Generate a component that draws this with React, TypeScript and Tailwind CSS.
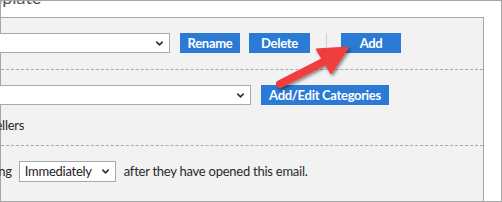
import { ChevronDown } from "lucide-react";

function Select({ className, label }: { className: string; label?: string }) {
    return (
        <div className={`flex items-center justify-between bg-white border border-[#a9a9a9] text-[#222] ${className}`}>
            <span className="pl-[5px]">{label}</span>
            <ChevronDown className="w-[11px] h-[11px] mr-[4px] text-[#333]" strokeWidth={3.5} />
        </div>
    );
}

function Btn({ children, className }: { children: React.ReactNode; className: string }) {
    return (
        <button className={`h-[20px] bg-[#2b7bd6] text-white text-[13px] tracking-[-0.3px] font-bold leading-none flex items-center justify-center ${className}`}>
            {children}
        </button>
    );
}

export default function App() {
    return (
        <div className="relative w-[502px] h-[202px] overflow-hidden bg-white font-['Lato',sans-serif]">
            <div className="w-[502px] h-[202px] border border-[#a6a6a6] flex flex-col">
                {/* Heading (cut off by the crop) */}
                <div className="h-[16px] overflow-hidden">
                    <h2 className="text-[18px] leading-[20px] text-[#555] mt-[-14px] ml-[-78px] whitespace-nowrap">Email Template</h2>
                </div>

                <div className="w-[483px] flex-1 bg-[#f2f2f2] border-t border-r border-[#a6a6a6] text-[13px] tracking-[-0.25px] text-[#2a2a2a]">
                    {/* Template row */}
                    <div className="flex items-center pt-[15px]">
                        <Select className="h-[20px] w-[209px] ml-[-40px]" />
                        <Btn className="w-[60px] ml-[10px]">Rename</Btn>
                        <Btn className="w-[61px] ml-[9px]">Delete</Btn>
                        <div className="w-px h-[20px] bg-[#d0d0d0] ml-[16px]" />
                        <Btn className="w-[60px] ml-[14px]">Add</Btn>
                    </div>

                    <div className="mt-[16px] border-t border-dashed border-[#aaa]" />

                    {/* Category row */}
                    <div className="flex items-center pt-[15px]">
                        <Select className="h-[20px] w-[290px] ml-[-40px]" />
                        <Btn className="w-[128px] ml-[10px]">Add/Edit Categories</Btn>
                    </div>
                    <div className="mt-[12px] h-[18px] flex items-center ml-[-59px] whitespace-nowrap">
                        Notify resellers
                    </div>

                    <div className="mt-[10px] border-t border-dashed border-[#aaa]" />

                    {/* Timing row */}
                    <div className="flex items-center pt-[15px] whitespace-nowrap">
                        <span className="ml-[-70px]">Send following</span>
                        <Select className="h-[21px] w-[97px] ml-[7px]" label="Immediately" />
                        <span className="ml-[8px]">after they have opened this email.</span>
                    </div>
                </div>
            </div>

            {/* Callout arrow */}
            <svg className="absolute inset-0 pointer-events-none" width="502" height="202" viewBox="0 0 502 202">
                <defs>
                    <filter id="sh" x="-20%" y="-20%" width="140%" height="140%">
                        <feDropShadow dx="1.5" dy="2" stdDeviation="1.5" floodColor="#000" floodOpacity="0.45" />
                    </filter>
                </defs>
                <g filter="url(#sh)" fill="#f03c3c" stroke="#f03c3c">
                    <line x1="280" y1="84" x2="327" y2="60" strokeWidth="8" strokeLinecap="round" />
                    <polygon points="316,49 349,47 331,74" strokeWidth="1" strokeLinejoin="round" />
                </g>
            </svg>
        </div>
    );
}
